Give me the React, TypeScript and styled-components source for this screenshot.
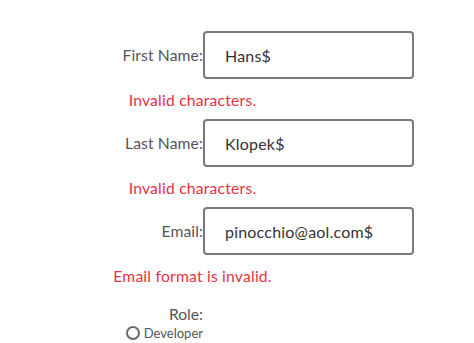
import React from "react";
import styled, { createGlobalStyle } from "styled-components";

const GlobalStyle = createGlobalStyle`
  html, body { margin: 0; padding: 0; background: #ffffff; }
  body { font-family: Lato, "Open Sans", sans-serif; }
  * { box-sizing: border-box; }
`;

const Form = styled.form`
  display: flex;
  flex-direction: column;
  padding-top: 31px;
  width: 474px;
`;

const Field = styled.div`
  display: flex;
  align-items: center;
`;

const Label = styled.label`
  width: 203px;
  text-align: right;
  font-size: 15.7px;
  color: #555555;
  letter-spacing: 0.1px;
`;

const Input = styled.input`
  width: 211px;
  height: 48px;
  border: 2px solid #7a7a7a;
  border-radius: 4px;
  padding: 0 0 0 20px;
  font-family: inherit;
  font-size: 16px;
  color: #333333;
  background: #ffffff;
  outline: none;
  letter-spacing: 0.2px;
`;

const ErrorText = styled.div`
  width: 385px;
  height: 40px;
  line-height: 42px;
  text-align: center;
  font-size: 15.7px;
  color: #e8333f;
  letter-spacing: 0.2px;
`;

const RoleBlock = styled.div`
  width: 203px;
  display: flex;
  flex-direction: column;
  align-items: flex-end;
  padding-top: 10px;
`;

const RoleLabel = styled.div`
  font-size: 15.7px;
  color: #555555;
  line-height: 18px;
`;

const RadioRow = styled.label`
  display: flex;
  align-items: center;
  gap: 4px;
  margin-top: 2px;
  font-size: 13px;
  color: #555555;
`;

const RadioCircle = styled.span`
  flex-shrink: 0;
  width: 14px;
  height: 14px;
  border: 2px solid #6a6a6a;
  border-radius: 50%;
  display: inline-block;
`;

const fields = [
  { label: "First Name:", value: "Hans$", error: "Invalid characters." },
  { label: "Last Name:", value: "Klopek$", error: "Invalid characters." },
  { label: "Email:", value: "pinocchio@aol.com$", error: "Email format is invalid." },
];

export default function App() {
  return (
    <>
      <GlobalStyle />
      <Form>
        {fields.map((f) => (
          <React.Fragment key={f.label}>
            <Field>
              <Label>{f.label}</Label>
              <Input defaultValue={f.value} />
            </Field>
            <ErrorText>{f.error}</ErrorText>
          </React.Fragment>
        ))}
        <RoleBlock>
          <RoleLabel>Role:</RoleLabel>
          <RadioRow>
            <RadioCircle />
            Developer
          </RadioRow>
        </RoleBlock>
      </Form>
    </>
  );
}
